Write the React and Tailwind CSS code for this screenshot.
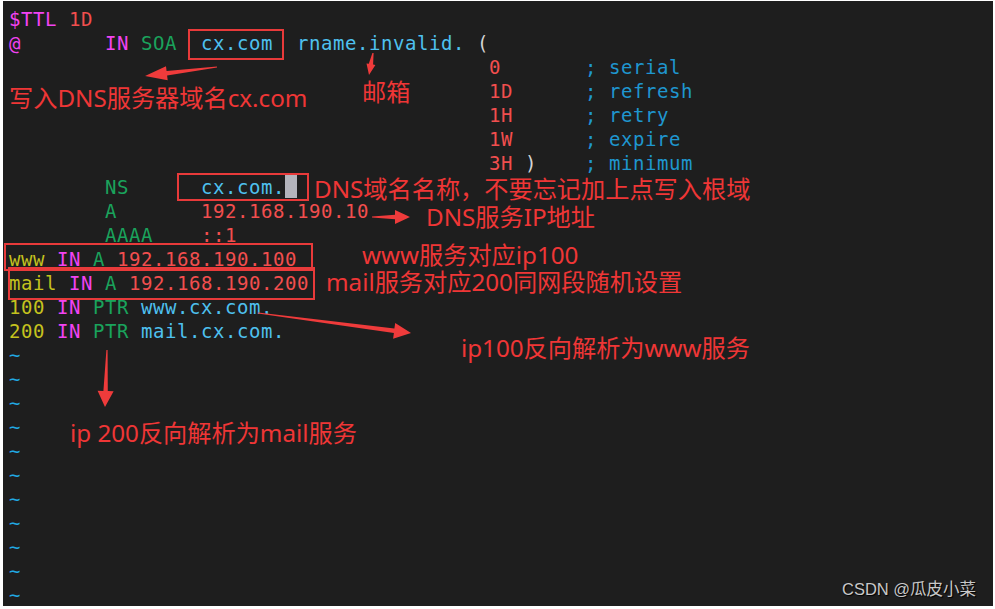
const C = {
  mag: "text-[#f243f2]",
  red: "text-[#f24e4e]",
  grn: "text-[#1aa35c]",
  cyn: "text-[#4ec1ef]",
  cmt: "text-[#1f96cf]",
  yel: "text-[#c4c21e]",
  wht: "text-[#d4d4d4]",
};

const pad = n => " ".repeat(n);

// each line is a list of [text, colour]
const lines = [
  [["$TTL", C.mag], [" "], ["1D", C.red]],
  [["@", C.mag], [pad(7)], ["IN", C.mag], [" "], ["SOA", C.grn], [pad(2)], ["cx.com", C.cyn], [pad(2)], ["rname.invalid.", C.cyn], [" "], ["(", C.wht]],
  [[pad(40)], ["0", C.red], [pad(7)], ["; serial", C.cmt]],
  [[pad(40)], ["1D", C.red], [pad(6)], ["; refresh", C.cmt]],
  [[pad(40)], ["1H", C.red], [pad(6)], ["; retry", C.cmt]],
  [[pad(40)], ["1W", C.red], [pad(6)], ["; expire", C.cmt]],
  [[pad(40)], ["3H", C.red], [" "], [")", C.wht], [pad(4)], ["; minimum", C.cmt]],
  [[pad(8)], ["NS", C.grn], [pad(6)], ["cx.com.", C.cyn], ["cursor"]],
  [[pad(8)], ["A", C.grn], [pad(7)], ["192.168.190.10", C.red]],
  [[pad(8)], ["AAAA", C.grn], [pad(4)], ["::1", C.red]],
  [["www", C.yel], [" "], ["IN", C.mag], [" "], ["A", C.grn], [" "], ["192.168.190.100", C.red]],
  [["mail", C.yel], [" "], ["IN", C.mag], [" "], ["A", C.grn], [" "], ["192.168.190.200", C.red]],
  [["100", C.yel], [" "], ["IN", C.mag], [" "], ["PTR", C.grn], [" "], ["www.cx.com.", C.cyn]],
  [["200", C.yel], [" "], ["IN", C.mag], [" "], ["PTR", C.grn], [" "], ["mail.cx.com.", C.cyn]],
];

const boxes = [
  "left-[185px] top-[28px] w-[96px] h-[31px]",
  "left-[174px] top-[172px] w-[132px] h-[28px]",
  "left-[1px] top-[242px] w-[309px] h-[28px]",
  "left-[5px] top-[266px] w-[307px] h-[33px]",
];

const notes = [
  ["写入DNS服务器域名cx.com", "left-[6px] top-[85px]"],
  ["邮箱", "left-[359px] top-[79px]"],
  ["DNS域名名称，不要忘记加上点写入根域", "left-[311px] top-[176px]"],
  ["DNS服务IP地址", "left-[423px] top-[204px]"],
  ["www服务对应ip100", "left-[359px] top-[242px]"],
  ["mail服务对应200同网段随机设置", "left-[323px] top-[269px]"],
  ["ip100反向解析为www服务", "left-[458px] top-[335px]"],
  ["ip 200反向解析为mail服务", "left-[67px] top-[420px]"],
];

// tail x,y -> tip x,y, head length, head half width
const arrows = [
  [214, 66, 142, 75, 22, 7],
  [370, 52, 366, 74, 11, 4.5],
  [369, 216, 407, 216, 15, 7],
  [255, 312, 408, 332, 17, 8],
  [104, 349, 102, 406, 16, 8],
];

function arrowPoints([x0, y0, x1, y1, hl, hw]) {
  const len = Math.hypot(x1 - x0, y1 - y0);
  const dx = (x1 - x0) / len;
  const dy = (y1 - y0) / len;
  const nx = -dy;
  const ny = dx;
  const bx = x1 - dx * hl;
  const by = y1 - dy * hl;
  const w0 = 0.6;
  const w1 = 2.2;
  const pts = [
    [x0 + nx * w0, y0 + ny * w0],
    [bx + nx * w1, by + ny * w1],
    [bx + nx * hw, by + ny * hw],
    [x1, y1],
    [bx - nx * hw, by - ny * hw],
    [bx - nx * w1, by - ny * w1],
    [x0 - nx * w0, y0 - ny * w0],
  ];
  return pts.map(p => p.map(v => v.toFixed(1)).join(",")).join(" ");
}

export default function App() {
  return (
    <div className="w-[995px] h-[609px] bg-white pt-px pl-[3px] pr-[2px] pb-[3px]">
      <div className="relative h-full bg-[#1e1e1e] overflow-hidden pt-[6px] pl-[6px]">
        {/* vim buffer */}
        <div className="font-['DejaVu_Sans_Mono',monospace] text-[19px] leading-[24px] tracking-[0.56px] whitespace-pre">
          {lines.map((line, i) => (
            <div key={i} className="h-[24px] flex">
              {line.map(([t, cls], j) =>
                t === "cursor" ? (
                  <span key={j} className="inline-block w-[12px] h-[23px] bg-[#b4b4bc]" />
                ) : (
                  <span key={j} className={cls}>{t}</span>
                )
              )}
            </div>
          ))}
          {Array.from({ length: 11 }).map((_, i) => (
            <div key={"t" + i} className="h-[24px] text-[#21a9e3]">~</div>
          ))}
        </div>

        {/* red boxes */}
        {boxes.map((b, i) => (
          <div key={i} className={"absolute border-2 border-[#e83a3a] " + b} />
        ))}

        {/* arrows */}
        <svg className="absolute inset-0" width="990" height="605">
          {arrows.map((a, i) => (
            <polygon key={i} points={arrowPoints(a)} fill="#ef3b3b" />
          ))}
        </svg>

        {/* red notes */}
        {notes.map(([t, pos], i) => (
          <div
            key={i}
            className={"absolute whitespace-nowrap text-[24.2px] leading-none text-[#ef3636] font-['Noto_Sans','Noto_Sans_CJK_SC',sans-serif] " + pos}
          >
            {t}
          </div>
        ))}

        <div className="absolute left-[839px] top-[580px] text-[16.5px] leading-none text-[#c8c8c8] font-['Liberation_Sans','Noto_Sans_CJK_SC',sans-serif] whitespace-nowrap [text-shadow:1px_1px_1px_#000]">
          CSDN @瓜皮小菜
        </div>
      </div>
    </div>
  );
}
